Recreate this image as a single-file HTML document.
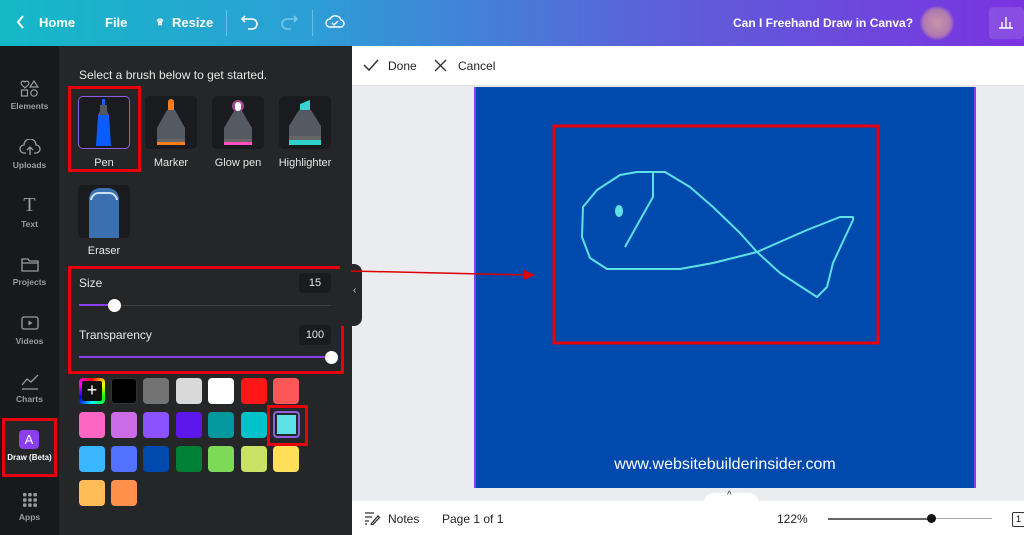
<!DOCTYPE html>
<html><head><meta charset="utf-8"><style>
*{box-sizing:border-box;margin:0;padding:0}
body{width:1024px;height:535px;overflow:hidden;position:relative;font-family:"Liberation Sans",sans-serif;background:#ebecf0}
.a{position:absolute}
.top{left:0;top:0;width:1024px;height:46px;background:linear-gradient(90deg,#14b9c6 0%,#2c9fd6 30%,#5d5fd9 65%,#7a33e0 100%)}
.tt{color:#fff;font-weight:bold;font-size:13px;top:15px}
.nav{left:0;top:46px;width:59px;height:489px;background:#18191b}
.panel{left:59px;top:46px;width:293px;height:489px;background:#252627}
.nl{color:#9a9ca0;font-size:8.5px;font-weight:bold;width:59px;text-align:center;left:0}
.tile{width:52px;height:53px;background:#191b1f;border-radius:5px}
.lbl{color:#e6e6e6;font-size:11px;text-align:center;width:70px}
.sw{width:26px;height:26px;border-radius:4px}
.red{border:3px solid #e8000b}
</style></head><body>
<div class="a top"></div>
<svg class="a" style="left:16px;top:14px" width="10" height="16"><path d="M7 2 L2 8 L7 14" stroke="#fff" stroke-width="2" fill="none"/></svg>
<div class="a tt" style="left:39px">Home</div>
<div class="a tt" style="left:105px">File</div>
<div class="a tt" style="left:156px;font-size:9px;top:17px">♛</div>
<div class="a tt" style="left:172px">Resize</div>
<div class="a" style="left:226px;top:10px;width:1px;height:26px;background:rgba(255,255,255,.3)"></div>
<svg class="a" style="left:240px;top:13px" width="20" height="18"><path d="M5 3 L2 6 L5 9 M2 6 H12 A5 5 0 0 1 12 16 H8" stroke="#fff" stroke-width="1.6" fill="none"/></svg>
<svg class="a" style="left:279px;top:13px" width="20" height="18"><path d="M15 3 L18 6 L15 9 M18 6 H8 A5 5 0 0 0 8 16 H12" stroke="rgba(255,255,255,.4)" stroke-width="1.6" fill="none"/></svg>
<div class="a" style="left:312px;top:10px;width:1px;height:26px;background:rgba(255,255,255,.3)"></div>
<svg class="a" style="left:325px;top:13px" width="20" height="16"><path d="M5 14 A4 4 0 0 1 5 6 A6 6 0 0 1 16 7 A3.5 3.5 0 0 1 15 14 Z M7 10 L9 12 L13 8" stroke="#fff" stroke-width="1.4" fill="none"/></svg>
<div class="a tt" style="left:733px;font-size:12px;top:16px">Can I Freehand Draw in Canva?</div>
<div class="a" style="left:920px;top:6px;width:34px;height:34px;border-radius:50%;background:radial-gradient(#c894a8,#b07ab0 55%,rgba(120,70,220,0) 75%)"></div>
<div class="a" style="left:989px;top:7px;width:35px;height:32px;background:rgba(255,255,255,.12);border-radius:4px"></div>
<svg class="a" style="left:997px;top:14px" width="18" height="16"><path d="M2 14H16 M5 14V8 M9 14V3 M13 14V8" stroke="#fff" stroke-width="1.4" fill="none"/></svg>

<div class="a nav"></div>
<svg class="a" style="left:20px;top:80px" width="20" height="18"><path d="M5 8 L1.5 4.5 A2 2 0 0 1 5 2 A2 2 0 0 1 8.5 4.5 Z M14 1 L18 7 H10 Z" stroke="#9a9ca0" stroke-width="1.2" fill="none"/><rect x="1.5" y="10" width="6" height="6" stroke="#9a9ca0" fill="none" stroke-width="1.2"/><circle cx="14" cy="13" r="3.2" stroke="#9a9ca0" fill="none" stroke-width="1.2"/></svg>
<div class="a nl" style="top:101px">Elements</div>
<svg class="a" style="left:19px;top:139px" width="22" height="18"><path d="M7 14 H5 A4 4 0 0 1 5 6 A6 6 0 0 1 17 6 A4 4 0 0 1 17 14 H15 M11 16 V8 M8 11 L11 8 L14 11" stroke="#9a9ca0" stroke-width="1.3" fill="none"/></svg>
<div class="a nl" style="top:160px">Uploads</div>
<div class="a" style="left:0;width:59px;text-align:center;top:194px;color:#9a9ca0;font-size:20px;font-family:'Liberation Serif',serif">T</div>
<div class="a nl" style="top:219px">Text</div>
<svg class="a" style="left:21px;top:257px" width="18" height="15"><path d="M1 2 H7 L8.5 4 H17 V14 H1 Z M1 6 H17" stroke="#9a9ca0" stroke-width="1.3" fill="none"/></svg>
<div class="a nl" style="top:277px">Projects</div>
<svg class="a" style="left:21px;top:316px" width="18" height="14"><rect x="1" y="1" width="16" height="12" rx="2" stroke="#9a9ca0" stroke-width="1.3" fill="none"/><path d="M7.5 4.5 L11.5 7 L7.5 9.5Z" fill="#9a9ca0"/></svg>
<div class="a nl" style="top:336px">Videos</div>
<svg class="a" style="left:21px;top:374px" width="18" height="16"><path d="M1 11 L6 5 L10 8 L17 1 M1 15 H17" stroke="#9a9ca0" stroke-width="1.3" fill="none"/></svg>
<div class="a nl" style="top:394px">Charts</div>
<div class="a" style="left:2px;top:418px;width:55px;height:59px;background:#252627;border:3px solid #e8000b"></div>
<div class="a" style="left:19px;top:430px;width:20px;height:19px;border-radius:4px;background:#8b3df0;color:#fff;font-size:13px;text-align:center;line-height:19px">A</div>
<div class="a nl" style="top:453px;color:#fff;font-size:8px">Draw (Beta)</div>
<svg class="a" style="left:22px;top:492px" width="16" height="16"><g fill="#9a9ca0"><rect x="1" y="1" width="3.5" height="3.5" rx="1"/><rect x="6.2" y="1" width="3.5" height="3.5" rx="1"/><rect x="11.4" y="1" width="3.5" height="3.5" rx="1"/><rect x="1" y="6.2" width="3.5" height="3.5" rx="1"/><rect x="6.2" y="6.2" width="3.5" height="3.5" rx="1"/><rect x="11.4" y="6.2" width="3.5" height="3.5" rx="1"/><rect x="1" y="11.4" width="3.5" height="3.5" rx="1"/><rect x="6.2" y="11.4" width="3.5" height="3.5" rx="1"/><rect x="11.4" y="11.4" width="3.5" height="3.5" rx="1"/></g></svg>
<div class="a nl" style="top:512px">Apps</div>

<div class="a panel"></div>
<div class="a" style="left:79px;top:68px;color:#e6e6e6;font-size:12px">Select a brush below to get started.</div>
<div class="a tile" style="left:78px;top:96px;border:1.5px solid #8b5fe0"></div>
<svg class="a" style="left:78px;top:96px" width="52" height="53"><rect x="24" y="3" width="3" height="6" fill="#1060ff"/><path d="M22 9 H29 V15 L31 19 H20 L22 15Z" fill="#555a62"/><path d="M20 19 H31 L33 50 H18Z" fill="#0a5cff"/></svg>
<div class="a lbl" style="left:69px;top:157px">Pen</div>
<div class="a tile" style="left:145px;top:96px"></div>
<svg class="a" style="left:145px;top:96px" width="52" height="53"><path d="M23 14 V6 A3 3 0 0 1 29 6 V14Z" fill="#ff7a1a"/><path d="M22 14 H30 L40 32 V48 H12 V32Z" fill="#555a62"/><rect x="12" y="43" width="28" height="3" fill="#666"/><rect x="12" y="46" width="28" height="3" fill="#ff7a1a"/></svg>
<div class="a lbl" style="left:136px;top:157px">Marker</div>
<div class="a tile" style="left:212px;top:96px"></div>
<svg class="a" style="left:212px;top:96px" width="52" height="53"><circle cx="26" cy="10" r="6" fill="#ff6ad5" opacity=".6"/><rect x="23" y="6" width="6" height="9" rx="3" fill="#fff"/><path d="M22 15 H30 L40 32 V48 H12 V32Z" fill="#555a62"/><rect x="12" y="43" width="28" height="3" fill="#666"/><rect x="12" y="46" width="28" height="3" fill="#ff4fbf"/></svg>
<div class="a lbl" style="left:203px;top:157px">Glow pen</div>
<div class="a tile" style="left:279px;top:96px"></div>
<svg class="a" style="left:279px;top:96px" width="52" height="53"><path d="M21 14 V8 L31 4 V14Z" fill="#3ad4d0"/><path d="M20 14 H32 L42 30 V48 H10 V30Z" fill="#555a62"/><rect x="10" y="40" width="32" height="4" fill="#666"/><rect x="10" y="44" width="32" height="5" fill="#2fcfca"/></svg>
<div class="a lbl" style="left:270px;top:157px">Highlighter</div>
<div class="a tile" style="left:78px;top:185px"></div>
<svg class="a" style="left:78px;top:185px" width="52" height="53"><path d="M11 53 V14 A11 11 0 0 1 22 3 H30 A11 11 0 0 1 41 14 V53Z" fill="#3a6fb0"/><path d="M13 15 A8 8 0 0 1 21 8 H31 A8 8 0 0 1 39 15" stroke="#cfe0f5" stroke-width="2" fill="none"/></svg>
<div class="a lbl" style="left:69px;top:245px">Eraser</div>
<div class="a red" style="left:68px;top:86px;width:73px;height:86px"></div>

<div class="a" style="left:79px;top:276px;color:#e6e6e6;font-size:12px">Size</div>
<div class="a" style="left:299px;top:273px;width:32px;height:20px;background:#1a1b1d;border-radius:4px;color:#e6e6e6;font-size:11px;text-align:center;line-height:20px">15</div>
<div class="a" style="left:79px;top:305px;width:252px;height:1px;background:#3d3e40"></div>
<div class="a" style="left:79px;top:304px;width:35px;height:2px;background:#8b3df0"></div>
<div class="a" style="left:108px;top:299px;width:13px;height:13px;border-radius:50%;background:#fff"></div>
<div class="a" style="left:79px;top:328px;color:#e6e6e6;font-size:12px">Transparency</div>
<div class="a" style="left:299px;top:325px;width:32px;height:20px;background:#1a1b1d;border-radius:4px;color:#e6e6e6;font-size:11px;text-align:center;line-height:20px">100</div>
<div class="a" style="left:79px;top:356px;width:252px;height:2px;background:#8b3df0"></div>
<div class="a" style="left:325px;top:351px;width:13px;height:13px;border-radius:50%;background:#fff"></div>
<div class="a red" style="left:68px;top:266px;width:276px;height:108px"></div>

<div class="a sw" style="left:79px;top:378px;background:conic-gradient(red,yellow,lime,cyan,blue,magenta,red);padding:3px"><div style="width:20px;height:20px;background:#111;border-radius:2px;color:#fff;font-size:18px;line-height:19px;text-align:center">+</div></div>
<div class="a sw" style="left:111px;top:378px;background:#000;border:1px solid #333"></div>
<div class="a sw" style="left:143px;top:378px;background:#737373"></div>
<div class="a sw" style="left:176px;top:378px;background:#d9d9d9"></div>
<div class="a sw" style="left:208px;top:378px;background:#fff"></div>
<div class="a sw" style="left:241px;top:378px;background:#ff1616"></div>
<div class="a sw" style="left:273px;top:378px;background:#ff5757"></div>
<div class="a sw" style="left:79px;top:412px;background:#ff66c4"></div>
<div class="a sw" style="left:111px;top:412px;background:#cb6ce6"></div>
<div class="a sw" style="left:143px;top:412px;background:#8c52ff"></div>
<div class="a sw" style="left:176px;top:412px;background:#5e17eb"></div>
<div class="a sw" style="left:208px;top:412px;background:#03989e"></div>
<div class="a sw" style="left:241px;top:412px;background:#00c2cb"></div>
<div class="a sw" style="left:273px;top:411px;width:27px;height:27px;border:2px solid #8b5fe0;background:#5ce1e6;box-shadow:inset 0 0 0 2px #252627"></div>
<div class="a red" style="left:267px;top:405px;width:41px;height:41px"></div>
<div class="a sw" style="left:79px;top:446px;background:#38b6ff"></div>
<div class="a sw" style="left:111px;top:446px;background:#5271ff"></div>
<div class="a sw" style="left:143px;top:446px;background:#004aad"></div>
<div class="a sw" style="left:176px;top:446px;background:#008037"></div>
<div class="a sw" style="left:208px;top:446px;background:#7ed957"></div>
<div class="a sw" style="left:241px;top:446px;background:#c9e265"></div>
<div class="a sw" style="left:273px;top:446px;background:#ffde59"></div>
<div class="a sw" style="left:79px;top:480px;background:#ffbd59"></div>
<div class="a sw" style="left:111px;top:480px;background:#ff914d"></div>

<div class="a" style="left:340px;top:264px;width:22px;height:62px;background:#252627;border-radius:0 8px 8px 0"></div>
<div class="a" style="left:353px;top:285px;color:#ccc;font-size:10px">‹</div>

<div class="a" style="left:352px;top:46px;width:672px;height:40px;background:#fff;border-bottom:1px solid #e3e3e3"></div>
<svg class="a" style="left:363px;top:58px" width="16" height="14"><path d="M1 7 L6 12 L15 2" stroke="#333" stroke-width="1.5" fill="none"/></svg>
<div class="a" style="left:388px;top:59px;font-size:12px;color:#222">Done</div>
<svg class="a" style="left:434px;top:59px" width="13" height="13"><path d="M1 1 L12 12 M12 1 L1 12" stroke="#333" stroke-width="1.4"/></svg>
<div class="a" style="left:458px;top:59px;font-size:12px;color:#222">Cancel</div>

<div class="a" style="left:474px;top:87px;width:502px;height:401px;background:#8b3df0"></div>
<div class="a" style="left:476px;top:87px;width:498px;height:401px;background:#004aad"></div>
<div class="a" style="left:476px;top:456px;width:498px;text-align:center;color:#fff;font-size:16px">www.websitebuilderinsider.com</div>
<svg class="a" style="left:0;top:0" width="1024" height="535">
<path d="M637 172 L665 172 L690 187 L713 207 L740 233 L757 252 L780 273 L817 297 L827 287 L833 263 L853 220 L853 217 L840 217 L807 230 L757 252 L713 263 L680 269 L607 269 L590 258 L582 237 L583 207 L597 190 L620 175 Z" stroke="#5ce1e6" stroke-width="2" fill="none" stroke-linejoin="round"/>
<path d="M653 172 L653 197 L640 220 L625 247" stroke="#5ce1e6" stroke-width="2" fill="none"/>
<ellipse cx="619" cy="211" rx="4" ry="6" fill="#5ce1e6"/>
<rect x="554" y="126" width="324" height="217" stroke="#e8000b" stroke-width="3" fill="none"/>
<path d="M351 271 L528 275" stroke="#d00" stroke-width="1.5"/>
<path d="M524 270 L535 275 L524 280Z" fill="#d00"/>
</svg>

<div class="a" style="left:352px;top:488px;width:672px;height:13px;background:#ebecf0"></div>
<div class="a" style="left:704px;top:493px;width:55px;height:10px;background:#fff;border-radius:10px 10px 0 0"></div>
<div class="a" style="left:727px;top:490px;font-size:10px;color:#333">^</div>
<div class="a" style="left:352px;top:501px;width:672px;height:34px;background:#fff"></div>
<svg class="a" style="left:364px;top:511px" width="16" height="14"><path d="M1 2 H10 M1 6 H8 M1 10 H5 M1 13 H3 M7 13 L14 5 L15.5 6.5 L8.5 14 Z" stroke="#333" stroke-width="1.3" fill="none"/></svg>
<div class="a" style="left:388px;top:512px;font-size:12px;color:#222">Notes</div>
<div class="a" style="left:442px;top:512px;font-size:12px;color:#222">Page 1 of 1</div>
<div class="a" style="left:777px;top:512px;font-size:12px;color:#222">122%</div>
<div class="a" style="left:828px;top:518px;width:164px;height:1px;background:#aaa"></div>
<div class="a" style="left:828px;top:518px;width:104px;height:1.5px;background:#666"></div>
<div class="a" style="left:927px;top:514px;width:9px;height:9px;border-radius:50%;background:#111"></div>
<div class="a" style="left:1012px;top:512px;width:14px;height:15px;border:1.3px solid #333;border-radius:2px;font-size:9px;padding-left:3px;line-height:13px">1</div>
</body></html>
